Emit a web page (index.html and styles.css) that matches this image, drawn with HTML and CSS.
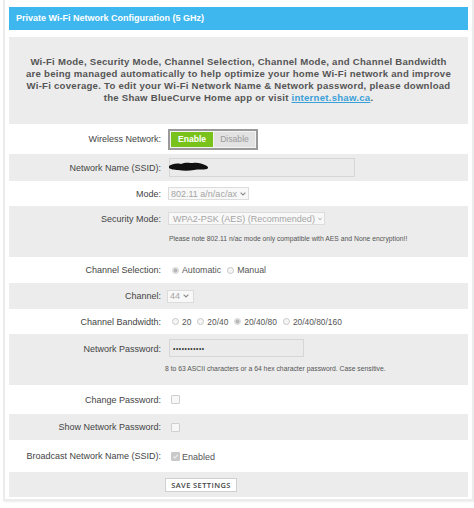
FILE: index.html
```html
<!DOCTYPE html>
<html>
<head>
<meta charset="utf-8">
<link rel="stylesheet" href="styles.css">
</head>
<body>
<div class="frame">
  <div class="panel-title">Private Wi-Fi Network Configuration (5 GHz)</div>
  <div class="notice">
    Wi-Fi Mode, Security Mode, Channel Selection, Channel Mode, and Channel Bandwidth<br>
    are being managed automatically to help optimize your home Wi-Fi network and improve<br>
    Wi-Fi coverage. To edit your Wi-Fi Network Name &amp; Network password, please download<br>
    the Shaw BlueCurve Home app or visit <a href="#" class="link">internet.shaw.ca</a>.
  </div>

  <div class="row white h-wireless">
    <div class="label">Wireless Network:</div>
    <div class="value">
      <div class="toggle"><span class="tog-on">Enable</span><span class="tog-off">Disable</span></div>
    </div>
  </div>

  <div class="row gray h-ssid">
    <div class="label">Network Name (SSID):</div>
    <div class="value">
      <div class="input ssid">
        <svg class="redact" width="42" height="12" viewBox="0 0 42 12"><path d="M1 5 C4 3 8 2 13 3 C17 1 22 2 25 2 C30 1 34 3 37 4 C40 5 41 7 39 8 C35 9 30 8 26 9 C21 10 15 10 10 9 C6 9 2 8 1 7 Z" fill="#111"/></svg>
      </div>
    </div>
  </div>

  <div class="row white h-mode">
    <div class="label">Mode:</div>
    <div class="value">
      <div class="select mode"><span>802.11 a/n/ac/ax</span><svg class="chev" width="6" height="4" viewBox="0 0 6 4"><path d="M0.6 0.7 L3 3 L5.4 0.7" fill="none" stroke="#8a8a8a" stroke-width="1.1"/></svg></div>
    </div>
  </div>

  <div class="row gray h-sec top">
    <div class="label lbl-sec">Security Mode:</div>
    <div class="value col">
      <div class="select sec"><span>WPA2-PSK (AES) (Recommended)</span><svg class="chev" width="6" height="4" viewBox="0 0 6 4"><path d="M0.6 0.7 L3 3 L5.4 0.7" fill="none" stroke="#8a8a8a" stroke-width="1.1"/></svg></div>
      <div class="note note-sec">Please note 802.11 n/ac mode only compatible with AES and None encryption!!</div>
    </div>
  </div>

  <div class="row white h-chsel">
    <div class="label">Channel Selection:</div>
    <div class="value opts">
      <span class="radio on"></span><span class="opt">Automatic</span>
      <span class="radio"></span><span class="opt">Manual</span>
    </div>
  </div>

  <div class="row gray h-ch">
    <div class="label">Channel:</div>
    <div class="value">
      <div class="select ch"><span>44</span><svg class="chev" width="6" height="4" viewBox="0 0 6 4"><path d="M0.6 0.7 L3 3 L5.4 0.7" fill="none" stroke="#8a8a8a" stroke-width="1.1"/></svg></div>
    </div>
  </div>

  <div class="row white h-bw">
    <div class="label">Channel Bandwidth:</div>
    <div class="value opts">
      <span class="radio"></span><span class="opt">20</span>
      <span class="radio"></span><span class="opt">20/40</span>
      <span class="radio on"></span><span class="opt">20/40/80</span>
      <span class="radio"></span><span class="opt">20/40/80/160</span>
    </div>
  </div>

  <div class="row gray h-pw top">
    <div class="label lbl-pw">Network Password:</div>
    <div class="value col">
      <div class="input pw">&bull;&bull;&bull;&bull;&bull;&bull;&bull;&bull;&bull;&bull;&bull;</div>
      <div class="note note-pw">8 to 63 ASCII characters or a 64 hex character password. Case sensitive.</div>
    </div>
  </div>

  <div class="row white h-chg">
    <div class="label">Change Password:</div>
    <div class="value"><span class="check"></span></div>
  </div>

  <div class="row gray h-show">
    <div class="label">Show Network Password:</div>
    <div class="value"><span class="check"></span></div>
  </div>

  <div class="row white h-bc">
    <div class="label">Broadcast Network Name (SSID):</div>
    <div class="value opts">
      <span class="check on"><svg width="7" height="7" viewBox="0 0 8 8"><path d="M1.5 4 L3.3 5.8 L6.6 2" fill="none" stroke="#f4f4f4" stroke-width="1.2"/></svg></span><span class="opt enabled">Enabled</span>
    </div>
  </div>

  <div class="row gray h-save">
    <div class="label"></div>
    <div class="value"><button class="save">SAVE SETTINGS</button></div>
  </div>
</div>
</body>
</html>
```

FILE: styles.css
```css
html, body {
  margin: 0;
  padding: 0;
  background: #fff;
}
body {
  font-family: "Liberation Sans", Arial, sans-serif;
  color: #4a4a4a;
  width: 474px;
  height: 508px;
  overflow: hidden;
}
.frame {
  margin-left: 3px;
  width: 459px;
  padding: 7px 4px 2px 4px;
  border: 2px solid #ececec;
  border-top: none;
  box-shadow: 1px 1px 2px rgba(0,0,0,0.08);
}
.panel-title {
  height: 23px;
  line-height: 23px;
  background: #3db7ee;
  color: #fff;
  font-weight: bold;
  font-size: 9px;
  padding-left: 7px;
}
.notice {
  margin-top: 7px;
  background: #ececec;
  height: 87px;
  box-sizing: border-box;
  padding-top: 19px;
  text-align: center;
  font-weight: bold;
  font-size: 9.6px;
  line-height: 12px;
  letter-spacing: 0.25px;
  color: #555;
}
.link {
  color: #3aa0d8;
  text-decoration: underline;
}
.row {
  display: grid;
  grid-template-columns: 152px 1fr;
  column-gap: 7px;
  align-items: center;
  font-size: 9px;
}
.row.top {
  align-items: start;
}
.white { background: #fff; }
.gray { background: #ececec; }
.label {
  text-align: right;
  color: #444;
  white-space: nowrap;
}
.value {
  display: flex;
  align-items: center;
}
.value.col {
  flex-direction: column;
  align-items: flex-start;
}
.h-wireless { height: 30px; }
.h-ssid { height: 27px; }
.h-mode { height: 25px; }
.h-sec { height: 51px; }
.h-chsel { height: 26px; }
.h-ch { height: 26px; }
.h-bw { height: 25px; }
.h-pw { height: 51px; }
.h-chg { height: 29px; }
.h-show { height: 26px; }
.h-bc { height: 32px; }
.h-save { height: 25px; }

.toggle {
  display: flex;
  border: 2px solid #9a9a9a;
  padding: 1px;
  background: #f3f3f3;
  margin-top: 1px;
}
.tog-on, .tog-off {
  display: block;
  width: 42px;
  height: 15px;
  line-height: 15px;
  text-align: center;
  font-size: 8.6px;
}
.tog-on {
  background: #79c21b;
  color: #fff;
  font-weight: bold;
}
.tog-off {
  background: #e2e2e2;
  color: #9a9a9a;
  margin-left: 1px;
  width: 41px;
}
.input {
  box-sizing: border-box;
  background: #ebebeb;
  border: 1px solid #d6d6d6;
  height: 19px;
  display: flex;
  align-items: center;
}
.ssid {
  width: 186px;
  margin-left: 1px;
  position: relative;
}
.redact {
  position: absolute;
  left: -2px;
  top: 2px;
}
.pw {
  width: 135px;
  height: 18px;
  margin-left: 1px;
  padding-left: 3px;
  font-size: 6.5px;
  letter-spacing: 0.6px;
  color: #333;
}
.lbl-sec { padding-top: 8px; }
.lbl-pw { padding-top: 10px; }
.h-sec .value { padding-top: 6px; }
.h-pw .value { padding-top: 5px; }
.select {
  box-sizing: border-box;
  height: 13px;
  border: 1px solid #dcdcdc;
  background: #f8f8f8;
  color: #a5a5a5;
  font-size: 9px;
  padding: 0 2px;
  white-space: nowrap;
  display: flex;
  align-items: center;
  gap: 3px;
}
.chev {
  display: block;
}
.mode { width: 81px; }
.sec { width: 157px; padding-left: 4px; }
.ch { width: 27px; margin-left: -1px; padding: 0 2px; }
.note {
  font-size: 6.8px;
  color: #555;
  white-space: nowrap;
}
.note-sec { margin-top: 10px; margin-left: 1px; }
.note-pw { margin-top: 8px; margin-left: -3px; }
.opts {
  padding-left: 4px;
}
.radio {
  display: inline-block;
  box-sizing: border-box;
  width: 7px;
  height: 7px;
  border-radius: 50%;
  border: 1px solid #c8c8c8;
  background: #f5f5f5;
  margin-right: 3px;
}
.radio.on {
  background: radial-gradient(circle, #b8b8b8 0 1.8px, #e8e8e8 2.3px);
  border-color: #d4d4d4;
}
.opt {
  margin-right: 6px;
  color: #555;
  font-size: 8.8px;
}
.h-bw .opt { font-size: 8.4px; }
.check {
  display: inline-flex;
  box-sizing: border-box;
  width: 9px;
  height: 9px;
  border: 1px solid #cfcfcf;
  background: #f7f7f7;
  border-radius: 1px;
  margin-left: 3px;
}
.check.on {
  background: #c9c9c9;
  border-color: #c9c9c9;
  margin-left: -1px;
  margin-right: 2px;
  align-items: center;
  justify-content: center;
}
.enabled { font-size: 9px; margin-top: 2px; }
.save {
  margin-left: -3px;
  height: 14px;
  width: 72px;
  padding: 0;
  border: 1px solid #d0d0d0;
  background: #fff;
  font-family: "Open Sans", "Liberation Sans", sans-serif;
  font-weight: 600;
  font-size: 7.5px;
  letter-spacing: 0.4px;
  color: #444;
}
```
